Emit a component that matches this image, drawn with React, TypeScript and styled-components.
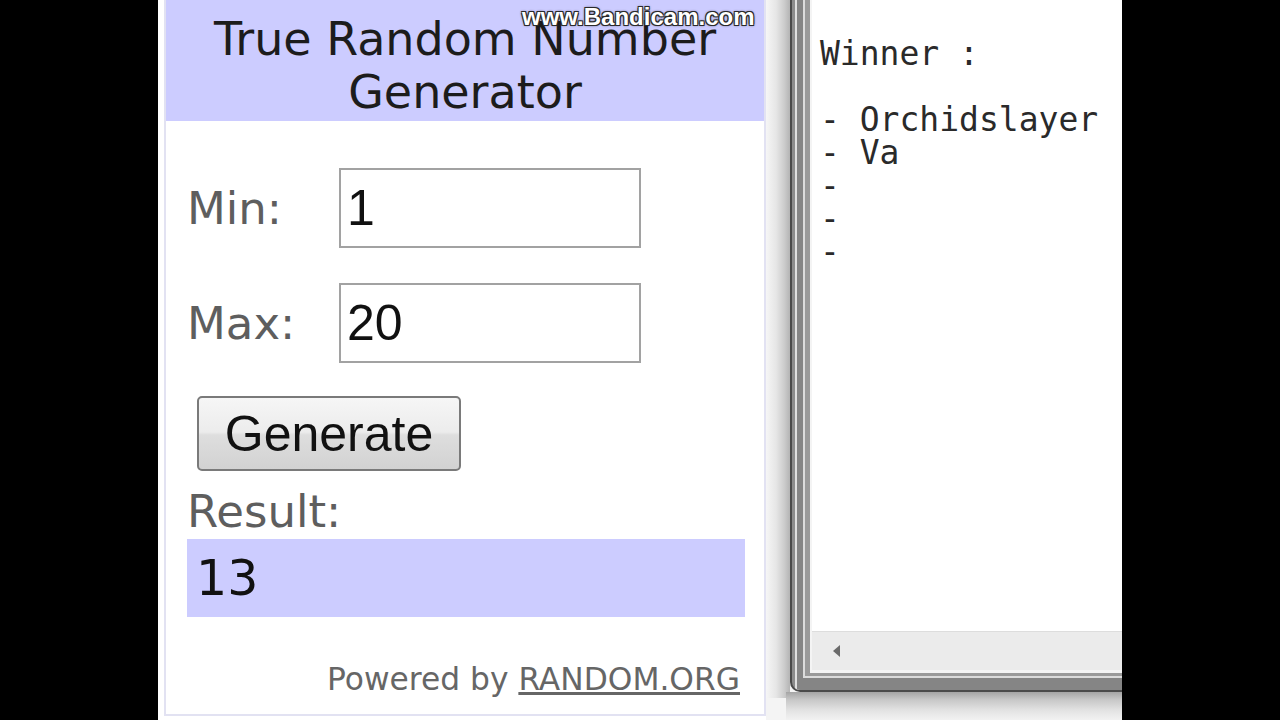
import React from "react";
import styled, { createGlobalStyle } from "styled-components";

const Global = createGlobalStyle`
  html, body { margin: 0; padding: 0; background: #000; }
  body { width: 1280px; height: 720px; overflow: hidden; }
`;

const Root = styled.div`
  position: relative;
  display: flex;
  width: 1280px;
  height: 720px;
  background: #000;
  overflow: hidden;
`;

const BlackBar = styled.div`
  width: 158px;
  flex: none;
  background: #000;
`;

const Stage = styled.div`
  width: 964px;
  flex: none;
  display: flex;
  align-items: flex-start;
  background: #fff;
  padding-left: 6px;
  box-sizing: border-box;
  overflow: hidden;
`;

const Widget = styled.div`
  width: 602px;
  height: 716px;
  flex: none;
  box-sizing: border-box;
  border: 2px solid #e2e2f2;
  border-top: none;
  background: #fff;
  display: flex;
  flex-direction: column;
  font-family: "DejaVu Sans", Verdana, sans-serif;
`;

const Header = styled.div`
  background: #ccccff;
  height: 121px;
  box-sizing: border-box;
  padding-top: 13px;
  text-align: center;
  font-size: 46px;
  line-height: 53px;
  color: #1c1c1c;
`;

const Body = styled.div`
  flex: 1;
  display: flex;
  flex-direction: column;
  padding: 47px 19px 19px 21px;
`;

const FieldRow = styled.div<{ $gap: number }>`
  display: flex;
  align-items: center;
  margin-bottom: ${(p) => p.$gap}px;
`;

const Label = styled.div<{ $w?: number }>`
  width: ${(p) => (p.$w ? `${p.$w}px` : "auto")};
  flex: none;
  font-size: 45px;
  line-height: 45px;
  color: #5e5e5e;
`;

const NumberInput = styled.input`
  width: 302px;
  height: 80px;
  box-sizing: border-box;
  border: 2px solid #a2a2a2;
  padding: 0 0 0 6px;
  margin: 0;
  font-family: "Liberation Sans", Arial, sans-serif;
  font-size: 50px;
  color: #111;
  background: #fff;
  outline: none;
`;

const GenerateButton = styled.button`
  width: 264px;
  height: 75px;
  margin: 0 0 18px 10px;
  padding: 0;
  box-sizing: border-box;
  border: 2px solid #7a7a7a;
  border-radius: 5px;
  background: linear-gradient(
    to bottom,
    #f6f6f6 0%,
    #ececec 48%,
    #dedede 52%,
    #d2d2d2 100%
  );
  font-family: "Liberation Sans", Arial, sans-serif;
  font-size: 50px;
  color: #111;
  cursor: pointer;
  align-self: flex-start;
`;

const ResultLabel = styled(Label)`
  margin-bottom: 5px;
`;

const ResultBox = styled.div`
  height: 78px;
  background: #ccccff;
  display: flex;
  align-items: center;
  padding-left: 9px;
  font-size: 49px;
  color: #111;
`;

const Powered = styled.div`
  margin-top: 47px;
  text-align: right;
  padding-right: 5px;
  font-size: 31.3px;
  line-height: 31px;
  color: #666;
`;

const PoweredLink = styled.a`
  color: #666;
  text-decoration: underline;
`;

const WindowArea = styled.div`
  flex: 1;
  height: 720px;
  padding: 0 0 28px 24px;
  box-sizing: border-box;
  display: flex;
  background:
    linear-gradient(to bottom, #a4a4a4 0px, #c8c8c8 8px, #e2e2e2 18px, #f2f2f2 28px)
      right bottom / calc(100% - 20px) 28px no-repeat,
    linear-gradient(to right, #f6f6f6 0px, #e6e6e6 10px, #cdcdcd 18px, #b4b4b4 24px)
      left top / 24px calc(100% - 22px) no-repeat,
    #f4f4f4;
`;

const FrameBand = styled.div<{ $c: string; $l: number; $b: number; $r?: number }>`
  flex: 1;
  display: flex;
  background: ${(p) => p.$c};
  padding-left: ${(p) => p.$l}px;
  padding-bottom: ${(p) => p.$b}px;
  border-bottom-left-radius: ${(p) => p.$r ?? 0}px;
  overflow: hidden;
`;

const Client = styled.div`
  flex: 1;
  display: flex;
  flex-direction: column;
  background: #fff;
`;

const TextArea = styled.div`
  flex: 1;
  padding: 37px 0 0 8px;
  font-family: "DejaVu Sans Mono", Consolas, monospace;
  font-size: 33px;
  line-height: 33px;
  color: #2a2a2a;
  white-space: pre;
`;

const HScroll = styled.div`
  height: 38px;
  flex: none;
  background: #ebebeb;
  border-top: 1px solid #dddddd;
  display: flex;
  align-items: center;
  padding-left: 20px;
`;

const Watermark = styled.div`
  position: absolute;
  left: 522px;
  top: 5px;
  font-family: "Liberation Sans", Arial, sans-serif;
  font-weight: bold;
  font-size: 24px;
  line-height: 24px;
  color: #fff;
  text-shadow: -1px -1px 0 #2a2a2a, 1px -1px 0 #2a2a2a, -1px 1px 0 #2a2a2a,
    1px 1px 0 #2a2a2a, 0 0 3px #000;
`;

const lines = ["Winner :", "", "- Orchidslayer", "- Va", "-", "-", "-"];

export default function App() {
  return (
    <>
      <Global />
      <Root>
        <BlackBar />
        <Stage>
          <Widget>
            <Header>
              True Random Number
              <br />
              Generator
            </Header>
            <Body>
              <FieldRow $gap={35}>
                <Label $w={152}>Min:</Label>
                <NumberInput readOnly value="1" />
              </FieldRow>
              <FieldRow $gap={33}>
                <Label $w={152}>Max:</Label>
                <NumberInput readOnly value="20" />
              </FieldRow>
              <GenerateButton>Generate</GenerateButton>
              <ResultLabel>Result:</ResultLabel>
              <ResultBox>13</ResultBox>
              <Powered>
                Powered by <PoweredLink>RANDOM.ORG</PoweredLink>
              </Powered>
            </Body>
          </Widget>
          <WindowArea>
            <FrameBand $c="#4a4a4a" $l={2} $b={2} $r={10}>
              <FrameBand $c="#8c8c8c" $l={3} $b={0} $r={8}>
                <FrameBand $c="#e0e0e0" $l={2} $b={0}>
                  <FrameBand $c="#858585" $l={6} $b={12}>
                    <FrameBand $c="#dcdcdc" $l={2} $b={2}>
                      <FrameBand $c="#9a9a9a" $l={5} $b={3}>
                        <FrameBand $c="#f4f4f4" $l={2} $b={3}>
                          <Client>
                            <TextArea>{lines.join("\n")}</TextArea>
                            <HScroll>
                              <svg width="10" height="12" viewBox="0 0 10 12">
                                <path d="M8 0 L1 6 L8 12 Z" fill="#6a6a6a" />
                              </svg>
                            </HScroll>
                          </Client>
                        </FrameBand>
                      </FrameBand>
                    </FrameBand>
                  </FrameBand>
                </FrameBand>
              </FrameBand>
            </FrameBand>
          </WindowArea>
        </Stage>
        <BlackBar />
        <Watermark>www.Bandicam.com</Watermark>
      </Root>
    </>
  );
}
